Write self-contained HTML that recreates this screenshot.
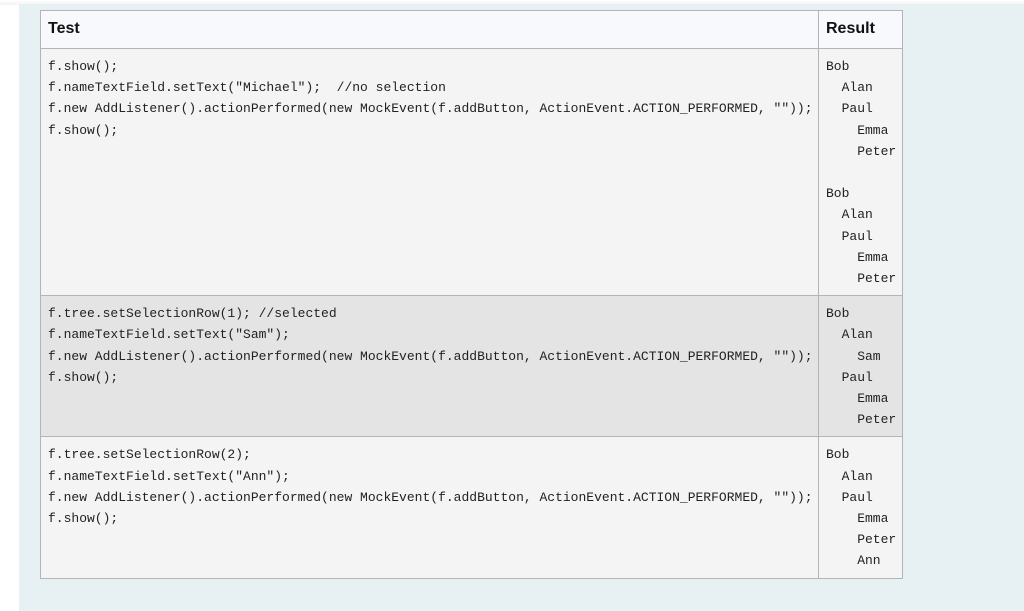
<!DOCTYPE html>
<html><head><style>
html,body{margin:0;padding:0;width:1024px;height:611px;overflow:hidden;background:#fff;}
.bg{position:absolute;left:19px;top:4px;width:1005px;height:607px;background:#e7f1f4;}
.top{position:absolute;left:0;top:0;width:1024px;height:5px;background:linear-gradient(#fff,#f0f4f5);}
table{position:absolute;left:40px;top:10px;border-collapse:collapse;width:863px;table-layout:fixed;}
td,th{border:1px solid #b4b4b4;vertical-align:top;padding:7px 7px 6px;}
th{background:#f8f9fd;font:bold 16px "Liberation Sans",sans-serif;text-align:left;height:23px;padding:9px 7px 5px;color:#111;}
td{font:13px/21.2px "Liberation Mono",monospace;color:#222;white-space:pre;overflow:hidden;}
tr.a td{background:#f4f4f4;}
tr.b td{background:#e4e4e4;}
col.c1{width:778px}
</style></head><body>
<div class="top"></div><div class="bg"></div>
<table><col class="c1"><col>
<tr><th>Test</th><th>Result</th></tr>
<tr class="a"><td>f.show();
f.nameTextField.setText("Michael");  //no selection
f.new AddListener().actionPerformed(new MockEvent(f.addButton, ActionEvent.ACTION_PERFORMED, ""));
f.show();</td><td>Bob
  Alan
  Paul
    Emma
    Peter

Bob
  Alan
  Paul
    Emma
    Peter</td></tr>
<tr class="b"><td>f.tree.setSelectionRow(1); //selected
f.nameTextField.setText("Sam");
f.new AddListener().actionPerformed(new MockEvent(f.addButton, ActionEvent.ACTION_PERFORMED, ""));
f.show();</td><td>Bob
  Alan
    Sam
  Paul
    Emma
    Peter</td></tr>
<tr class="a"><td>f.tree.setSelectionRow(2);
f.nameTextField.setText("Ann");
f.new AddListener().actionPerformed(new MockEvent(f.addButton, ActionEvent.ACTION_PERFORMED, ""));
f.show();</td><td>Bob
  Alan
  Paul
    Emma
    Peter
    Ann</td></tr>
</table>
</body></html>
